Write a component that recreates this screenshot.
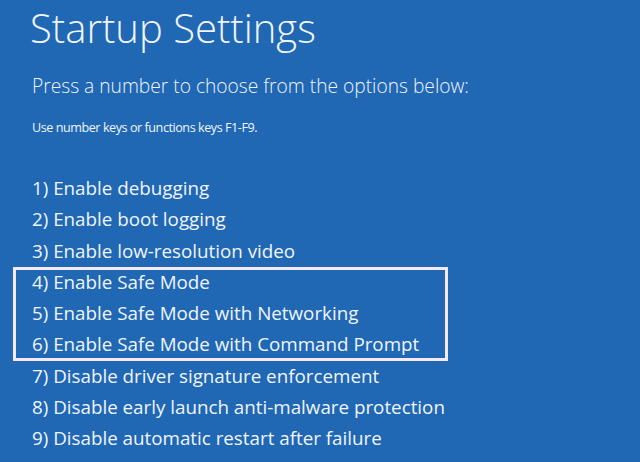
const options = [
  '1) Enable debugging',
  '2) Enable boot logging',
  '3) Enable low-resolution video',
];

const safeModes = [
  '4) Enable Safe Mode',
  '5) Enable Safe Mode with Networking',
  '6) Enable Safe Mode with Command Prompt',
];

const rest = [
  '7) Disable driver signature enforcement',
  '8) Disable early launch anti-malware protection',
  '9) Disable automatic restart after failure',
];

function Option({ label }: { label: string }) {
  return <div className="h-[31.25px] leading-[31.25px] text-[18.8px]">{label}</div>;
}

export default function App() {
  return (
    <div
      className="w-[640px] h-[462px] overflow-hidden bg-[#2067b4] text-[#f0f5fb] pl-[30px] pt-[4px]"
      style={{ fontFamily: '"Open Sans", "Noto Sans", sans-serif' }}
    >
      <h1 className="text-[40px] leading-[48px] font-light">Startup Settings</h1>
      <p className="mt-[22px] pl-[2px] text-[19.2px] leading-[24px] font-light">
        Press a number to choose from the options below:
      </p>
      <p className="mt-[20px] pl-[2px] text-[12.6px] leading-[20px] tracking-[-0.45px]">
        Use number keys or functions keys F1-F9.
      </p>
      <div className="mt-[35px] pl-[2px]">
        {options.map((o) => (
          <Option key={o} label={o} />
        ))}
        <div className="relative">
          <div className="absolute top-0 bottom-0 left-[-19px] w-[435px] border-[3px] border-[#f6e8f0]" />
          {safeModes.map((o) => (
            <Option key={o} label={o} />
          ))}
        </div>
        {rest.map((o) => (
          <Option key={o} label={o} />
        ))}
      </div>
    </div>
  );
}
